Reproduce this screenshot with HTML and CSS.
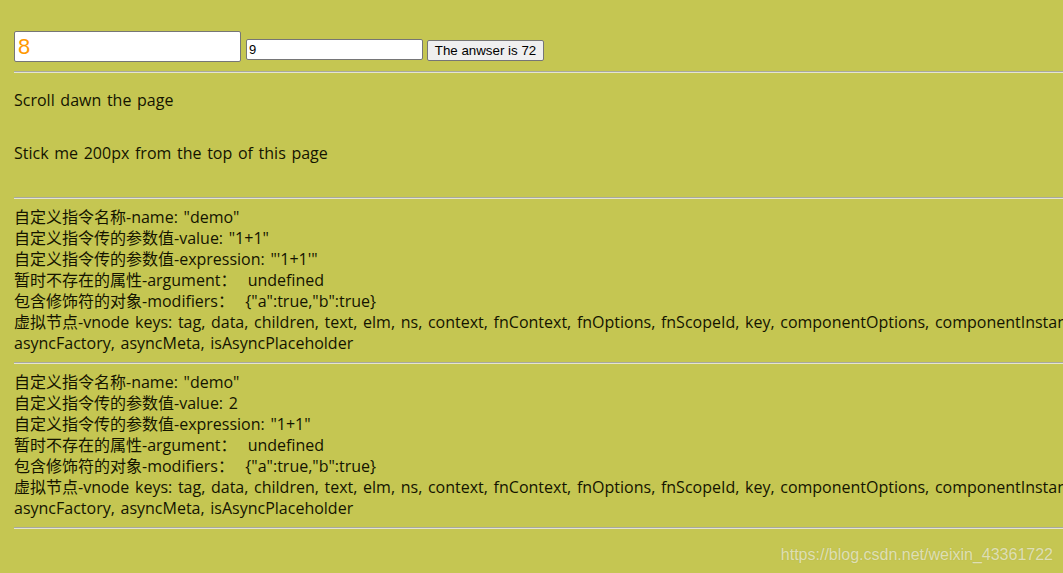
FILE: index.html
```html
<!DOCTYPE html>
<html lang="zh">
<head>
<meta charset="utf-8">
<title>Directives</title>
<link rel="stylesheet" href="styles.css">
</head>
<body>
<div class="page">
  <div class="controls">
    <input class="big-input" type="text" value="8">
    <input class="small-input" type="text" value="9">
    <button class="answer-btn" type="button">The anwser is 72</button>
  </div>
  <hr class="rule rule-top">
  <p class="scroll-text">Scroll dawn the page</p>
  <p class="stick-text">Stick me 200px from the top of this page</p>
  <hr class="rule">
  <div class="info">
    <div>自定义指令名称-name: "demo"</div>
    <div>自定义指令传的参数值-value: "1+1"</div>
    <div>自定义指令传的参数值-expression: "'1+1'"</div>
    <div>暂时不存在的属性-argument：&nbsp; undefined</div>
    <div>包含修饰符的对象-modifiers：&nbsp; {"a":true,"b":true}</div>
    <div class="keys">虚拟节点-vnode keys: tag, data, children, text, elm, ns, context, fnContext, fnOptions, fnScopeId, key, componentOptions, componentInstance, parent, raw, isStatic, isRootInsert, isComment, isCloned, isOnce,<br>asyncFactory, asyncMeta, isAsyncPlaceholder</div>
  </div>
  <hr class="rule">
  <div class="info">
    <div>自定义指令名称-name: "demo"</div>
    <div>自定义指令传的参数值-value: 2</div>
    <div>自定义指令传的参数值-expression: "1+1"</div>
    <div>暂时不存在的属性-argument：&nbsp; undefined</div>
    <div>包含修饰符的对象-modifiers：&nbsp; {"a":true,"b":true}</div>
    <div class="keys">虚拟节点-vnode keys: tag, data, children, text, elm, ns, context, fnContext, fnOptions, fnScopeId, key, componentOptions, componentInstance, parent, raw, isStatic, isRootInsert, isComment, isCloned, isOnce,<br>asyncFactory, asyncMeta, isAsyncPlaceholder</div>
  </div>
  <hr class="rule">
</div>
<div class="watermark">https://blog.csdn.net/weixin_43361722</div>
</body>
</html>
```
FILE: styles.css
```css
html, body {
  margin: 0;
  padding: 0;
  height: 100%;
  overflow: hidden;
}
body {
  background: #c5c652;
  font-family: "Open Sans", "Noto Sans CJK SC", sans-serif;
  font-size: 16px;
  word-spacing: 1.5px;
  color: #141400;
  position: relative;
}
.page {
  width: 1800px;
  padding: 31px 0 0 14px;
}
.controls {
  display: flex;
  align-items: flex-end;
  height: 31px;
  word-spacing: normal;
}
.big-input {
  box-sizing: border-box;
  width: 227px;
  height: 31px;
  margin: 0;
  padding: 1px 3px;
  border: 1px solid #767676;
  border-radius: 2px;
  font-family: "Liberation Sans", Arial, sans-serif;
  font-size: 22px;
  color: #ff9900;
  background: #fff;
}
.small-input {
  box-sizing: border-box;
  width: 177px;
  height: 21px;
  margin: 0 0 2px 5px;
  padding: 1px 2px;
  border: 1px solid #767676;
  border-radius: 2px;
  font-family: "Liberation Sans", Arial, sans-serif;
  font-size: 13px;
  color: #000;
  background: #fff;
}
.answer-btn {
  box-sizing: border-box;
  width: 117px;
  height: 21px;
  margin: 0 0 1px 4px;
  padding: 0 6px;
  border: 1px solid #767676;
  border-radius: 2px;
  background: #efefef;
  font-family: "Liberation Sans", Arial, sans-serif;
  font-size: 13.33px;
  word-spacing: normal;
  color: #000;
}
.rule {
  border: 0;
  border-top: 1px solid #a8a8a0;
  border-bottom: 1px solid #e4e4d0;
  height: 0;
  margin: 8px 0 8px;
}
.rule-top {
  margin-top: 9px;
}
.scroll-text {
  margin: 17px 0 0;
  line-height: 21px;
}
.stick-text {
  margin: 32px 0 33px;
  line-height: 21px;
}
.info {
  line-height: 21px;
  white-space: nowrap;
}
.watermark {
  position: absolute;
  right: 10px;
  bottom: 9px;
  font-family: "Liberation Sans", Arial, sans-serif;
  font-size: 16px;
  word-spacing: normal;
  color: rgba(255, 255, 255, 0.6);
  text-shadow: 0 0 1px rgba(120, 120, 40, 0.3);
}
```
